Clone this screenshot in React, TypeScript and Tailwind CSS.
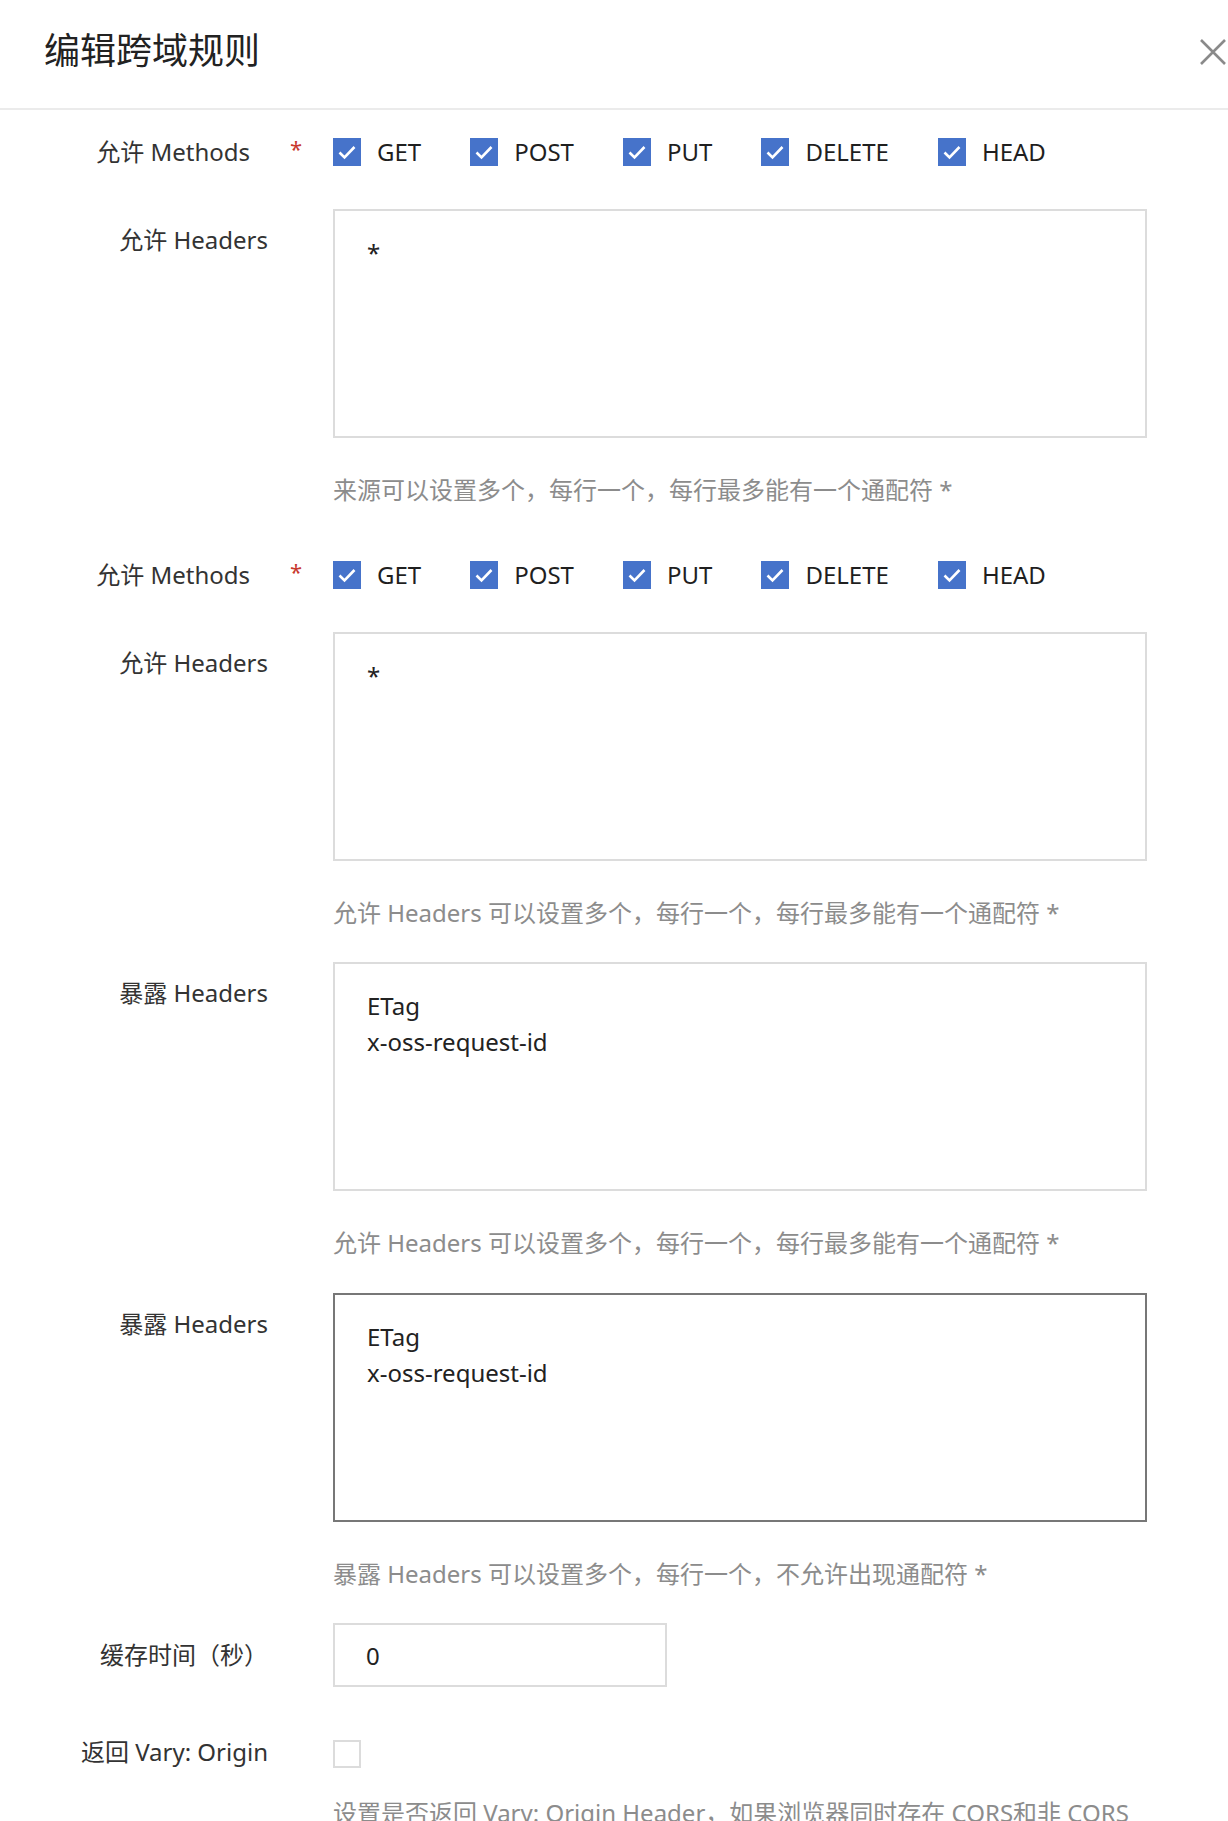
import type { ReactNode } from 'react';

const METHODS = ['GET', 'POST', 'PUT', 'DELETE', 'HEAD'];

function CheckedBox() {
  return (
    <svg width="28" height="28" viewBox="0 0 28 28" className="shrink-0">
      <rect width="28" height="28" fill="#4673ca" />
      <polyline points="6.5,14.5 11.5,19.5 21.5,9" fill="none" stroke="#fff" strokeWidth="2.6" />
    </svg>
  );
}

// una fila del formulario: etiqueta | asterisco | contenido
function Row({ label, required, align = 'center', children }: { label?: string; required?: boolean; align?: 'center' | 'start'; children: ReactNode }) {
  return (
    <div className={`grid grid-cols-[268px_65px_814px] ${align === 'center' ? 'items-center' : 'items-start'}`}>
      <div className={`text-right text-[24px] leading-[36px] text-[#333] whitespace-nowrap ${required ? 'pr-[18px]' : ''} ${align === 'start' ? 'pt-[13px]' : ''}`}>
        {label}
      </div>
      <div className="pl-[22px] self-start -mt-[4px] text-[22px] leading-[36px] text-[#c8392f]">{required ? '*' : ''}</div>
      <div>{children}</div>
    </div>
  );
}

function MethodsRow({ className }: { className: string }) {
  return (
    <div className={className}>
      <Row label="允许 Methods" required>
        <div className="flex items-center h-[36px]">
          {METHODS.map((m) => (
            <label key={m} className="flex items-center mr-[49px]">
              <CheckedBox />
              <span className="ml-[16px] text-[24px] leading-[36px] text-[#1f1f1f]">{m}</span>
            </label>
          ))}
        </div>
      </Row>
    </div>
  );
}

function Area({ label, value, dark, className }: { label: string; value: string; dark?: boolean; className: string }) {
  return (
    <div className={className}>
      <Row label={label} align="start">
        <textarea
          readOnly
          defaultValue={value}
          className={`block w-[814px] h-[229px] resize-none outline-none border-2 ${dark ? 'border-[#777]' : 'border-[#dcdcdc]'} pt-[24px] px-[32px] text-[24px] leading-[36px] text-[#222]`}
        />
      </Row>
    </div>
  );
}

function Help({ text, className }: { text: string; className: string }) {
  return (
    <div className={className}>
      <Row>
        <p className="text-[24px] leading-[36px] text-[#8c8c8c]">{text}</p>
      </Row>
    </div>
  );
}

export default function App() {
  return (
    <div className="min-h-screen bg-white font-['Noto_Sans','Noto_Sans_CJK_SC',sans-serif] overflow-hidden">
      {/* Header */}
      <div className="h-[110px] border-b-2 border-[#ebebeb] flex items-center justify-between pl-[44px] pr-[1px] pb-[6px]">
        <h2 className="text-[36px] leading-[44px] text-[#222]">编辑跨域规则</h2>
        <svg width="28" height="28" viewBox="0 0 28 28" className="mt-[2px]">
          <path d="M2 2 L26 26 M26 2 L2 26" stroke="#8a8a8a" strokeWidth="2.6" />
        </svg>
      </div>

      <div className="pt-[24px] pb-[40px]">
        <MethodsRow className="" />
        <Area className="mt-[39px]" label="允许 Headers" value="*" />
        <Help className="mt-[34px]" text="来源可以设置多个，每行一个，每行最多能有一个通配符 *" />

        <MethodsRow className="mt-[49px]" />
        <Area className="mt-[39px]" label="允许 Headers" value="*" />
        <Help className="mt-[34px]" text="允许 Headers 可以设置多个，每行一个，每行最多能有一个通配符 *" />

        <Area className="mt-[31px]" label="暴露 Headers" value={'ETag\nx-oss-request-id'} />
        <Help className="mt-[34px]" text="允许 Headers 可以设置多个，每行一个，每行最多能有一个通配符 *" />

        <Area className="mt-[32px]" label="暴露 Headers" value={'ETag\nx-oss-request-id'} dark />
        <Help className="mt-[34px]" text="暴露 Headers 可以设置多个，每行一个，不允许出现通配符 *" />

        <div className="mt-[31px]">
          <Row label="缓存时间（秒）">
            <input
              readOnly
              value="0"
              className="block w-[334px] h-[64px] border-2 border-[#dcdcdc] outline-none px-[31px] text-[24px] text-[#222]"
            />
          </Row>
        </div>

        <div className="mt-[47px]">
          <Row label="返回 Vary: Origin">
            <div className="h-[36px] flex items-center">
              <span className="block w-[28px] h-[28px] mt-[4px] border-2 border-[#dcdcdc] bg-white" />
            </div>
          </Row>
        </div>

        <Help
          className="mt-[25px]"
          text="设置是否返回 Vary: Origin Header，如果浏览器同时存在 CORS和非 CORS 请求，请启用该选项，否则可能会出现跨域问题。"
        />
      </div>
    </div>
  );
}
